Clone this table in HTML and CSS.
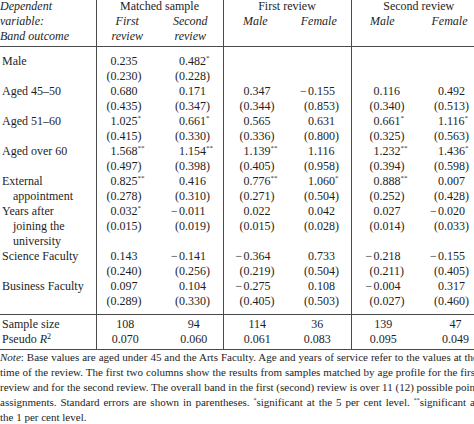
FILE: index.html
```html
<!DOCTYPE html>
<html>
<head>
<meta charset="utf-8">
<link rel="stylesheet" href="styles.css">
</head>
<body>
<div class="wrap">
<table class="tbl">
<colgroup>
<col class="c-lab"><col class="c-m1"><col class="c-m2"><col class="c-f1"><col class="c-f2"><col class="c-s1"><col class="c-s2">
</colgroup>
<thead>
<tr class="h1">
<th rowspan="2" class="dep">Dependent<br>variable:<br>Band outcome</th>
<th colspan="2" class="grp sep">Matched sample</th>
<th colspan="2" class="grp sep">First review</th>
<th colspan="2" class="grp sep">Second review</th>
</tr>
<tr class="h2">
<th class="sub sep">First<br>review</th>
<th class="sub">Second<br>review</th>
<th class="sub sep">Male</th>
<th class="sub">Female</th>
<th class="sub sep">Male</th>
<th class="sub">Female</th>
</tr>
</thead>
<tbody class="main">
<tr>
<td>Male</td>
<td class="sep">0.235<br><span class="o">(</span>0.230)</td>
<td>0.482<sup>*</sup><br><span class="o">(</span>0.228)</td>
<td class="sep"></td><td></td>
<td class="sep"></td><td></td>
</tr>
<tr>
<td>Aged 45–50</td>
<td class="sep">0.680<br><span class="o">(</span>0.435)</td>
<td>0.171<br><span class="o">(</span>0.347)</td>
<td class="sep">0.347<br><span class="o">(</span>0.344)</td>
<td><span class="m">−</span>0.155<br><span class="o">(</span>0.853)</td>
<td class="sep">0.116<br><span class="o">(</span>0.340)</td>
<td>0.492<br><span class="o">(</span>0.513)</td>
</tr>
<tr>
<td>Aged 51–60</td>
<td class="sep">1.025<sup>*</sup><br><span class="o">(</span>0.415)</td>
<td>0.661<sup>*</sup><br><span class="o">(</span>0.330)</td>
<td class="sep">0.565<br><span class="o">(</span>0.336)</td>
<td>0.631<br><span class="o">(</span>0.800)</td>
<td class="sep">0.661<sup>*</sup><br><span class="o">(</span>0.325)</td>
<td>1.116<sup>*</sup><br><span class="o">(</span>0.563)</td>
</tr>
<tr>
<td>Aged over 60</td>
<td class="sep">1.568<sup>**</sup><br><span class="o">(</span>0.497)</td>
<td>1.154<sup>**</sup><br><span class="o">(</span>0.398)</td>
<td class="sep">1.139<sup>**</sup><br><span class="o">(</span>0.405)</td>
<td>1.116<br><span class="o">(</span>0.958)</td>
<td class="sep">1.232<sup>**</sup><br><span class="o">(</span>0.394)</td>
<td>1.436<sup>*</sup><br><span class="o">(</span>0.598)</td>
</tr>
<tr>
<td>External<br>appointment</td>
<td class="sep">0.825<sup>**</sup><br><span class="o">(</span>0.278)</td>
<td>0.416<br><span class="o">(</span>0.310)</td>
<td class="sep">0.776<sup>**</sup><br><span class="o">(</span>0.271)</td>
<td>1.060<sup>*</sup><br><span class="o">(</span>0.504)</td>
<td class="sep">0.888<sup>**</sup><br><span class="o">(</span>0.252)</td>
<td>0.007<br><span class="o">(</span>0.428)</td>
</tr>
<tr>
<td>Years after<br>joining the<br>university</td>
<td class="sep">0.032<sup>*</sup><br><span class="o">(</span>0.015)</td>
<td><span class="m">−</span>0.011<br><span class="o">(</span>0.019)</td>
<td class="sep">0.022<br><span class="o">(</span>0.015)</td>
<td>0.042<br><span class="o">(</span>0.028)</td>
<td class="sep">0.027<br><span class="o">(</span>0.014)</td>
<td><span class="m">−</span>0.020<br><span class="o">(</span>0.033)</td>
</tr>
<tr>
<td>Science Faculty</td>
<td class="sep">0.143<br><span class="o">(</span>0.240)</td>
<td><span class="m">−</span>0.141<br><span class="o">(</span>0.256)</td>
<td class="sep"><span class="m">−</span>0.364<br><span class="o">(</span>0.219)</td>
<td>0.733<br><span class="o">(</span>0.504)</td>
<td class="sep"><span class="m">−</span>0.218<br><span class="o">(</span>0.211)</td>
<td><span class="m">−</span>0.155<br><span class="o">(</span>0.405)</td>
</tr>
<tr>
<td>Business Faculty</td>
<td class="sep">0.097<br><span class="o">(</span>0.289)</td>
<td>0.104<br><span class="o">(</span>0.330)</td>
<td class="sep"><span class="m">−</span>0.275<br><span class="o">(</span>0.405)</td>
<td>0.108<br><span class="o">(</span>0.503)</td>
<td class="sep"><span class="m">−</span>0.004<br><span class="o">(</span>0.027)</td>
<td>0.317<br><span class="o">(</span>0.460)</td>
</tr>
</tbody>
<tbody class="stats">
<tr>
<td>Sample size</td>
<td class="sep">108</td>
<td>94</td>
<td class="sep">114</td>
<td>36</td>
<td class="sep">139</td>
<td>47</td>
</tr>
<tr>
<td>Pseudo <i>R</i><sup class="pw">2</sup></td>
<td class="sep">0.070</td>
<td>0.060</td>
<td class="sep">0.061</td>
<td>0.083</td>
<td class="sep">0.095</td>
<td>0.049</td>
</tr>
</tbody>
</table>
<p class="note"><i>Note</i>: Base values are aged under 45 and the Arts Faculty. Age and years of service refer to the values at the time of the review. The first two columns show the results from samples matched by age profile for the first review and for the second review. The overall band in the first (second) review is over 11 (12) possible point assignments. Standard errors are shown in parentheses. <sup>*</sup>significant at the 5 per cent level. <sup>**</sup>significant at the&nbsp;1 per cent level.</p>
</div>
</body>
</html>
```

FILE: styles.css
```css
html, body {
  margin: 0;
  padding: 0;
  background: #ffffff;
  overflow: hidden;
}

body {
  width: 474px;
  height: 424px;
  font-family: "Liberation Serif", "Times New Roman", serif;
  font-size: 12px;
  line-height: 15px;
  color: #1e1e1e;
}

.wrap {
  width: 486px;
  margin-top: -1px;
}

.tbl {
  border-collapse: collapse;
  table-layout: fixed;
  width: 486px;
}

.c-lab { width: 96px; }
.c-m1 { width: 62px; }
.c-m2 { width: 65px; }
.c-f1 { width: 64px; }
.c-f2 { width: 64px; }
.c-s1 { width: 62px; }
.c-s2 { width: 73px; }

.tbl th,
.tbl td {
  padding: 0;
  font-weight: normal;
  text-align: left;
  vertical-align: top;
  white-space: nowrap;
}

.tbl .sep {
  border-left: 1px solid #4a4a4a;
}

.dep {
  font-style: italic;
  padding-left: 0;
}

.grp {
  text-align: center !important;
}

.sub {
  text-align: center !important;
  font-style: italic;
}

.tbl thead tr.h2 th,
.tbl thead th.dep {
  border-bottom: 1px solid #4a4a4a;
  padding-bottom: 2px;
}

.tbl td:first-child {
  padding-left: 13px;
  text-indent: -11px;
}

.main tr:first-child td {
  padding-top: 7px;
}

.main tr:last-child td {
  padding-bottom: 5px;
}

.main td:nth-child(2) { padding-left: 14px; }
.main td:nth-child(3) { padding-left: 21px; }
.main td:nth-child(4) { padding-left: 20px; }
.main td:nth-child(5) { padding-left: 21px; }
.main td:nth-child(6) { padding-left: 22px; }
.main td:nth-child(7) { padding-left: 25px; }

.o {
  display: inline-block;
  width: 4px;
  margin-left: -4px;
  text-indent: 0;
}

.m {
  display: inline-block;
  width: 8px;
  margin-left: -8px;
  text-indent: 0;
}

sup {
  font-size: 7px;
  line-height: 0;
  vertical-align: 5px;
}

.pw {
  font-size: 8px;
  vertical-align: 4px;
}

.stats tr:first-child td {
  border-top: 1px solid #4a4a4a;
  padding-top: 2px;
}

.stats tr:last-child td {
  border-bottom: 1px solid #4a4a4a;
  padding-bottom: 2px;
}

.stats td:not(:first-child) {
  text-align: center;
}

.stats td:nth-child(2) { padding-right: 4px; }
.stats td:nth-child(3) { padding-left: 7px; }
.stats td:nth-child(4) { padding-left: 4px; }
.stats td:nth-child(5) { padding-right: 3px; }
.stats td:nth-child(6) { padding-left: 2px; }
.stats td:nth-child(7) { padding-left: 12px; }

.note {
  width: 478px;
  margin: 0;
  font-size: 11px;
  line-height: 15px;
  text-align: justify;
}

.note sup {
  font-size: 6px;
  vertical-align: 4px;
}
```
